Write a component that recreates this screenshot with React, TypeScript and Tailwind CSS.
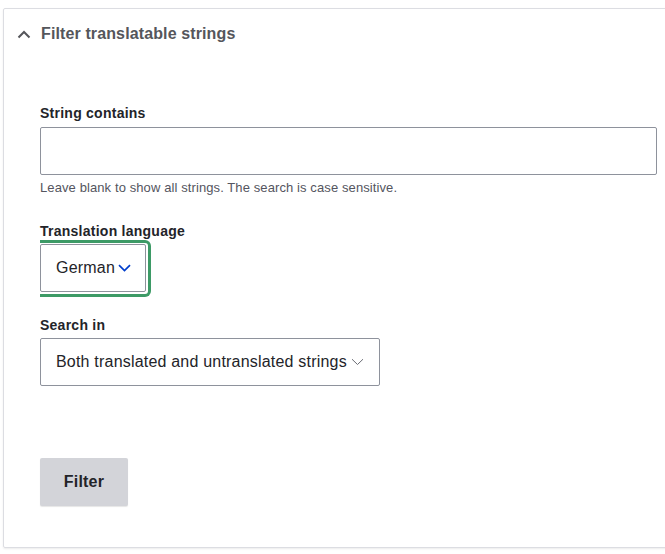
import React from "react";

const font = { fontFamily: '"Liberation Sans", Arial, sans-serif' };

function Chevron({ color, width = 1.5 }: { color: string; width?: number }) {
  return (
    <svg width="13" height="8" viewBox="0 0 13 8" fill="none" className="shrink-0">
      <path d="M1 1.2 L6.5 6.5 L12 1.2" stroke={color} strokeWidth={width} />
    </svg>
  );
}

export default function App() {
  return (
    <div
      className="w-[665px] h-[554px] overflow-hidden bg-white pt-[8px] pl-[3px]"
      style={font}
    >
      <div className="w-[691px] h-[540px] border border-[#dcdde2] rounded-[2px] shadow-[0_1px_2px_rgba(0,0,0,0.08)] flex flex-col">
        <div className="h-[49px] pt-[1px] flex items-center pl-[13px] gap-[10px]">
          <svg width="14" height="9" viewBox="0 0 14 9" fill="none">
            <path d="M1.5 7.5 L7 2 L12.5 7.5" stroke="#55565b" strokeWidth="2" />
          </svg>
          <span className="text-[16px] leading-[20px] font-bold tracking-[0.12px] text-[#55565b]">
            Filter translatable strings
          </span>
        </div>
        <div className="pl-[36px] flex flex-col">
          <label className="mt-[46px] text-[14px] leading-[18px] font-bold tracking-[0.25px] text-[#232429]">
            String contains
          </label>
          <div className="mt-[5px] w-[617px] h-[48px] border border-[#8e929c] rounded-[2px] bg-white" />
          <div className="mt-[4px] text-[13px] leading-[18px] tracking-[0.1px] text-[#545560]">
            Leave blank to show all strings. The search is case sensitive.
          </div>
          <label className="mt-[25px] text-[14px] leading-[18px] font-bold tracking-[0.25px] text-[#232429]">
            Translation language
          </label>
          <div className="mt-[4px] relative w-[106px] h-[48px]">
            <div className="absolute left-0 top-[-4px] right-[-5px] bottom-[-5px] border-[3px] border-l-0 border-[#3d9a66] rounded-r-[6px]" />
            <div className="relative w-[106px] h-[48px] border border-[#8e929c] rounded-[2px] bg-white flex items-center pl-[15px] gap-[3px]">
              <span className="text-[16px] tracking-[0.2px] text-[#232429]">German</span>
              <Chevron color="#003ecc" width={1.7} />
            </div>
          </div>
          <label className="mt-[24px] text-[14px] leading-[18px] font-bold tracking-[0.25px] text-[#232429]">
            Search in
          </label>
          <div className="mt-[4px] w-[340px] h-[48px] border border-[#8e929c] rounded-[2px] bg-white flex items-center pl-[15px] gap-[4px]">
            <span className="text-[16px] tracking-[0.2px] text-[#232429]">Both translated and untranslated strings</span>
            <Chevron color="#6b6d75" width={1} />
          </div>
          <button className="mt-[72px] w-[88px] h-[48px] bg-[#d3d4d9] rounded-[2px] shadow-[0_1px_1px_rgba(0,0,0,0.1)] text-[16px] font-bold tracking-[0.2px] text-[#232429]">
            Filter
          </button>
        </div>
      </div>
    </div>
  );
}
